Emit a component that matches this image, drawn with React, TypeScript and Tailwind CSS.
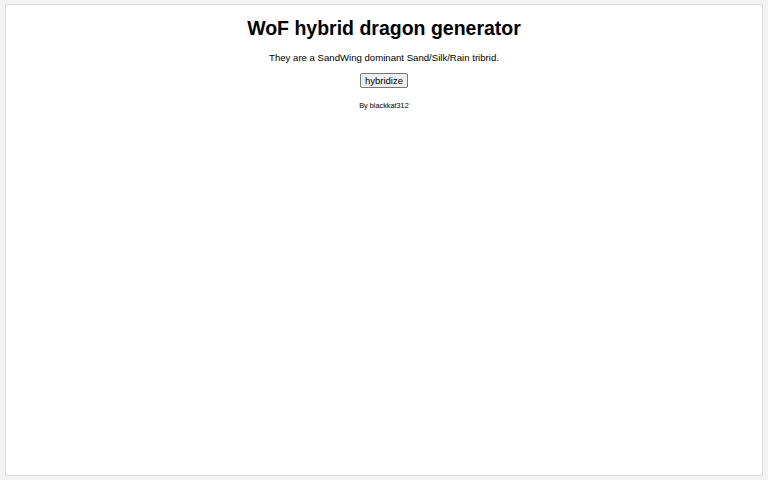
import { useState } from "react";

const tribes = ["Sand", "Silk", "Rain", "Mud", "Sky", "Sea", "Ice", "Night", "Leaf", "Hive"];

function roll() {
  const picked = [...tribes].sort(() => Math.random() - 0.5).slice(0, 3);
  return `They are a ${picked[0]}Wing dominant ${picked.join("/")} tribrid.`;
}

export default function App() {
  const [result, setResult] = useState(
    "They are a SandWing dominant Sand/Silk/Rain tribrid."
  );

  return (
    <div className="h-[480px] w-full bg-[#f3f3f3] p-[4px_5px_4px_5px] font-['Liberation_Sans',Arial,sans-serif]">
      <div className="flex h-full flex-col items-center border border-[#dcdcdc] bg-white text-black">
        <h1 className="mt-[11px] text-[19.5px] leading-[24px] font-bold">WoF hybrid dragon generator</h1>
        <p className="mt-[12px] text-[9.6px] leading-[12px]">{result}</p>
        <button
          onClick={() => setResult(roll())}
          className="mt-[9px] h-[15px] rounded-[2px] border border-[#767676] bg-[#efefef] px-[4px] text-[9.5px] leading-[12px]"
        >
          hybridize
        </button>
        <p className="mt-[13px] text-[7.3px] leading-[10px]">By blackkat312</p>
      </div>
    </div>
  );
}
